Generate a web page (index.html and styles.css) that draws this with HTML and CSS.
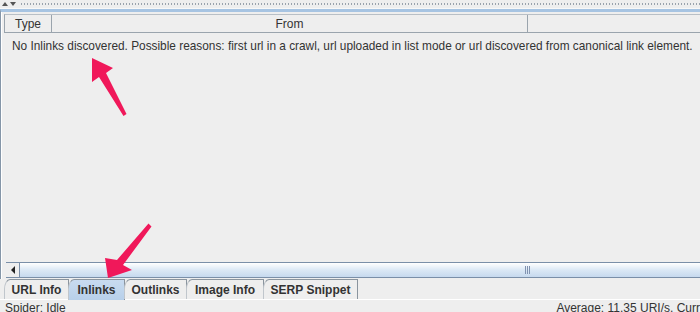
FILE: index.html
```html
<!DOCTYPE html>
<html>
<head>
<meta charset="utf-8">
<link rel="stylesheet" href="styles.css">
</head>
<body>
<div class="app">
  <div class="divider">
    <span class="arr up"></span><span class="arr down"></span>
    <span class="dots"></span>
  </div>
  <div class="panel">
    <div class="table">
      <div class="thead">
        <div class="th th-type">Type</div>
        <div class="th th-from">From</div>
        <div class="th th-rest"></div>
      </div>
      <div class="tbody">
        <p class="msg">No Inlinks discovered. Possible reasons: first url in a crawl, url uploaded in list mode or url discovered from canonical link element.</p>
      </div>
    </div>
    <div class="hscroll">
      <div class="sbtn"><span class="larr"></span></div>
      <div class="thumb"><span class="grip"></span></div>
    </div>
  </div>
  <div class="tabs">
    <div class="tab t1">URL Info</div>
    <div class="tab t2 sel">Inlinks</div>
    <div class="tab t3">Outlinks</div>
    <div class="tab t4">Image Info</div>
    <div class="tab t5">SERP Snippet</div>
  </div>
  <div class="status">
    <span>Spider: Idle</span>
    <span class="right">Average: 11.35 URI/s. Curr</span>
  </div>
</div>
<svg class="pointer p1" width="60" height="70" viewBox="0 0 60 70">
  <polygon points="3,3 24,13 17,18 37.5,59 34.5,61 10,22 3,27" fill="#f0185a"/>
</svg>
<svg class="pointer p2" width="60" height="70" viewBox="0 0 60 70">
  <polygon points="8,58 32,50 23,45 51.5,6.5 48.5,3.5 17,40 5,38" fill="#f0185a"/>
</svg>
</body>
</html>
```

FILE: styles.css
```css
* { box-sizing: border-box; }
html, body { margin: 0; padding: 0; }
body {
  width: 700px;
  height: 312px;
  overflow: hidden;
  background: #eeeeee;
  font-family: "Liberation Sans", Arial, sans-serif;
  font-size: 12px;
  color: #333333;
  position: relative;
}
.app { display: flex; flex-direction: column; height: 312px; }
.divider {
  height: 9px;
  display: flex;
  align-items: center;
  padding-left: 2px;
  gap: 1px;
  border-bottom: 1px solid #f8f8f8;
}
.arr { width: 0; height: 0; border-left: 3px solid transparent; border-right: 3px solid transparent; }
.arr.up { border-bottom: 4px solid #555; margin-right: 1px; }
.arr.down { border-top: 4px solid #555; }
.dots {
  flex: 1;
  height: 2px;
  margin-left: 3px;
  background-image: radial-gradient(circle, #9aa3ad 0.6px, transparent 0.8px);
  background-size: 3px 2px;
}
.panel {
  border-top: 3px solid #a7c4e2;
  border-left: 1px solid #8596a8;
  padding: 2px 0 0 3px;
  height: 270px;
  display: flex;
  flex-direction: column;
  box-shadow: inset 1px 0 0 #ffffff;
}
.table { flex: 1; display: flex; flex-direction: column; }
.thead {
  display: flex;
  height: 19px;
  border-top: 1px solid #b8bfc6;
  border-bottom: 1px solid #9aa4ad;
  border-left: 1px solid #9aa4ad;
}
.th {
  display: flex;
  align-items: center;
  justify-content: center;
  color: #333;
  font-size: 12px;
  background: #eeeeee;
  border-right: 1px solid #9aa4ad;
}
.th-type { width: 47px; }
.th-from { width: 476px; }
.th-rest { flex: 1; border-right: none; }
.tbody { flex: 1; }
.msg {
  margin: 6px 0 0 8px;
  font-size: 11.85px;
  color: #333;
  white-space: nowrap;
}
.hscroll {
  height: 16px;
  display: flex;
  border-top: 1px solid #7a8fa8;
  border-bottom: 1px solid #7a8fa8;
  margin-left: 2px;
  margin-bottom: 1px;
}
.sbtn {
  width: 14px;
  background: #eeeeee;
  display: flex;
  align-items: center;
  justify-content: center;
  border-right: 1px solid #7a8fa8;
}
.larr { width: 0; height: 0; border-top: 4px solid transparent; border-bottom: 4px solid transparent; border-right: 4px solid #222; }
.thumb {
  flex: 1;
  background: linear-gradient(#ffffff, #dbe8f5 50%, #c6d9ee);
  display: flex;
  align-items: center;
  padding-left: 505px;
}
.grip {
  width: 6px;
  height: 8px;
  background: repeating-linear-gradient(90deg, #8092b0 0 1px, transparent 1px 2px);
}
.tabs {
  height: 21px;
  display: flex;
  padding-left: 4px;
  border-bottom: 1px solid #ffffff;
}
.tab {
  height: 20px;
  display: flex;
  align-items: center;
  justify-content: center;
  font-weight: bold;
  font-size: 12px;
  color: #333;
  background: #eeeeee;
  border: 1px solid #8a949e;
  border-bottom: none;
  margin-right: -1px;
  border-top-left-radius: 6px 10px;
  border-left-color: #c0c6cc;
  white-space: nowrap;
}
.t1 { width: 65px; }
.t2 { width: 57px; }
.t3 { width: 63px; }
.t4 { width: 78px; }
.t5 { width: 95px; }
.tab.sel {
  background: linear-gradient(#c8dbf0, #b8d0ea);
  height: 21px;
}
.status {
  height: 12px;
  display: flex;
  justify-content: space-between;
  padding-left: 5px;
  font-size: 12px;
  line-height: 16px;
  color: #333;
  overflow: hidden;
  white-space: nowrap;
}
.pointer { position: absolute; }
.p1 { left: 89px; top: 55px; }
.p2 { left: 100px; top: 220px; }
```
